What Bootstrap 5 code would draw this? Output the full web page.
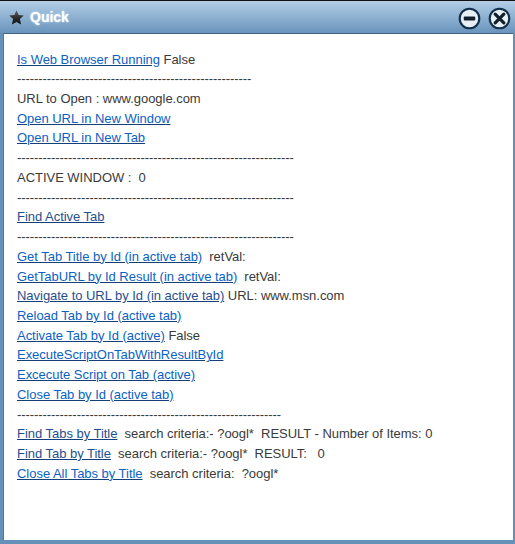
<!DOCTYPE html>
<html lang="en"><head><meta charset="utf-8"><title>Quick</title>
<link href="https://cdn.jsdelivr.net/npm/bootstrap@5.3.0/dist/css/bootstrap.min.css" rel="stylesheet">
<style>
html,body{height:100%;margin:0;background:#6590b8}
.win{height:544px;display:flex;flex-direction:column;border-top:1px solid #111;background:#6590b8}
.bar{height:32px;padding:0 4px 0 9px;background:linear-gradient(#b4cfe6 0,#a3c2de 20%,#6a94bc 100%);flex:none}
.ttl{font:bold 14px "Liberation Sans",sans-serif;color:#fff;margin-left:6px;text-shadow:0 0 2px #dcecff}
.pane{flex:1;background:#fff;margin:0 2px 4px 3px;border-top:1px solid #3f6587;border-left:1px solid #4f7ba3;padding:15.6px 13px 0;font:13px/19.73px "Liberation Sans",sans-serif;letter-spacing:-.03px;color:#3a3a3a;overflow:hidden}
.ln{white-space:pre;height:19.73px}
.ln.rule{letter-spacing:-.07px}
.ln a{color:#0b62c4;text-decoration:underline;text-decoration-color:#143f78}
.ln a.dk{color:#1f4f8f}
.wgap{gap:7px}
.wbtn{display:block;width:23px;height:23px;margin-top:2px}
.wstar{display:block;width:15px;height:15px;margin-top:1px}
</style></head><body>
<div class="win">
<div class="bar d-flex align-items-center">
<svg class="wstar" viewBox="0 0 17 17"><defs><linearGradient id="sg" x1="0" y1="0" x2="0" y2="1"><stop offset="0" stop-color="#5a5a5a"/><stop offset=".55" stop-color="#2b2b2b"/><stop offset="1" stop-color="#111"/></linearGradient></defs><path d="M8.5 .5l2.400 5.200 5.800.6-4.300 3.900 1.300 6.300-5.200-3-5.200 3 1.300-6.300-4.300-3.900 5.800-.6z" fill="url(#sg)"/></svg>
<span class="ttl">Quick</span>
<div class="ms-auto d-flex wgap">
<svg class="wbtn" viewBox="0 0 24 24"><circle cx="12" cy="12" r="10.200" fill="#e8f0f6" stroke="#12304c" stroke-width="2.200"/><rect x="6" y="10" width="12" height="4" rx="1" fill="#12202c"/></svg>
<svg class="wbtn" viewBox="0 0 24 24"><circle cx="12" cy="12" r="10.200" fill="#e8f0f6" stroke="#12304c" stroke-width="2.200"/><path d="M7.500 7.500l9 9M16.500 7.500l-9 9" stroke="#12202c" stroke-width="3.400" stroke-linecap="round"/></svg>
</div>
</div>
<div class="pane">
<div class="ln"><a href="#">Is Web Browser Running</a> False</div>
<div class="ln rule">-------------------------------------------------------</div>
<div class="ln">URL to Open : www.google.com</div>
<div class="ln"><a href="#">Open URL in New Window</a></div>
<div class="ln"><a href="#">Open URL in New Tab</a></div>
<div class="ln rule">-----------------------------------------------------------------</div>
<div class="ln">ACTIVE WINDOW :  0</div>
<div class="ln rule">-----------------------------------------------------------------</div>
<div class="ln"><a class="dk" href="#">Find Active Tab</a></div>
<div class="ln rule">-----------------------------------------------------------------</div>
<div class="ln"><a href="#">Get Tab Title by Id (in active tab)</a>  retVal:</div>
<div class="ln"><a href="#">GetTabURL by Id Result (in active tab)</a>  retVal:</div>
<div class="ln"><a class="dk" href="#">Navigate to URL by Id (in active tab)</a> URL: www.msn.com</div>
<div class="ln"><a href="#">Reload Tab by Id (active tab)</a></div>
<div class="ln"><a href="#">Activate Tab by Id (active)</a> False</div>
<div class="ln"><a href="#">ExecuteScriptOnTabWithResultById</a></div>
<div class="ln"><a href="#">Excecute Script on Tab (active)</a></div>
<div class="ln"><a href="#">Close Tab by Id (active tab)</a></div>
<div class="ln rule">--------------------------------------------------------------</div>
<div class="ln"><a class="dk" href="#">Find Tabs by Title</a>  search criteria:- ?oogl*  RESULT - Number of Items: 0</div>
<div class="ln"><a class="dk" href="#">Find Tab by Title</a>  search criteria:- ?oogl*  RESULT:   0</div>
<div class="ln"><a href="#">Close All Tabs by Title</a>  search criteria:  ?oogl*</div>
</div>
</div>
<script src="https://cdn.jsdelivr.net/npm/bootstrap@5.3.0/dist/js/bootstrap.bundle.min.js"></script>
</body></html>
